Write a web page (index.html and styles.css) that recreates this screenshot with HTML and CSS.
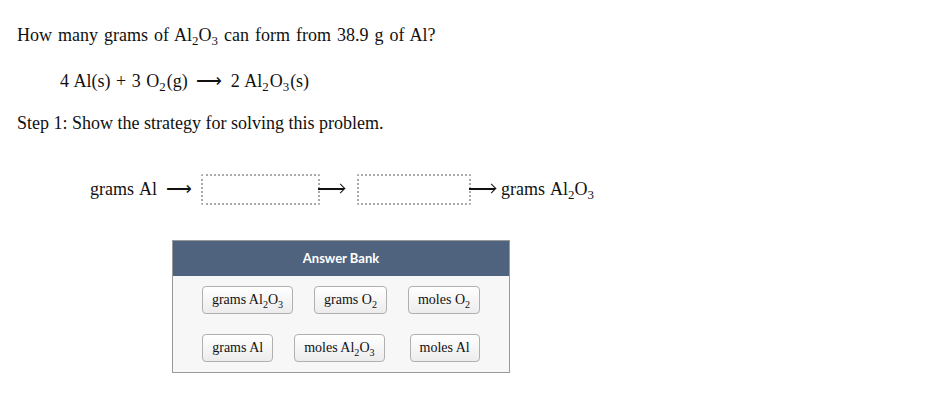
FILE: index.html
```html
<!DOCTYPE html>
<html lang="en">
<head>
    <meta charset="UTF-8">
    <title>Stoichiometry strategy</title>
    <link rel="stylesheet" href="styles.css">
</head>
<body>
<div class="question">
    <p class="prompt">How many grams of Al<sub>2</sub>O<sub>3</sub> can form from 38.9 g of Al?</p>
    <p class="equation">4 Al(s) + 3 O<sub>2</sub>(g) <span class="arrow">&#10230;</span> 2 Al<sub>2</sub>O<sub>3</sub>(s)</p>
    <p class="step">Step 1: Show the strategy for solving this problem.</p>

    <div class="strategy">
        <span class="label">grams Al</span>
        <span class="arrow">&#10230;</span>
        <div class="slot"></div>
        <span class="link"></span>
        <div class="slot second"></div>
        <span class="link"></span>
        <span class="label">grams Al<sub>2</sub>O<sub>3</sub></span>
    </div>

    <div class="bank">
        <div class="bank-title">Answer Bank</div>
        <div class="bank-body">
            <div class="bank-row">
                <button class="chip">grams Al<sub>2</sub>O<sub>3</sub></button>
                <button class="chip">grams O<sub>2</sub></button>
                <button class="chip">moles O<sub>2</sub></button>
            </div>
            <div class="bank-row">
                <button class="chip">grams Al</button>
                <button class="chip">moles Al<sub>2</sub>O<sub>3</sub></button>
                <button class="chip wide-gap">moles Al</button>
            </div>
        </div>
    </div>
</div>
</body>
</html>
```

FILE: styles.css
```css
body {
    margin: 0;
    padding: 0;
    background: #ffffff;
    color: #111;
    font-family: "Liberation Serif", "Times New Roman", serif;
    font-size: 18px;
    word-spacing: 1.5px;
}
.question {
    padding: 23px 17px;
}
p {
    margin: 0;
}
sub {
    font-size: 72%;
    vertical-align: -4px;
    line-height: 0;
}
.prompt {
    line-height: 24px;
}
.equation {
    margin-top: 22px;
    padding-left: 43px;
    line-height: 24px;
    word-spacing: 1px;
}
.equation .arrow {
    margin: 0 3px;
}
.equation sub {
    margin-right: 1px;
}
.step {
    margin-top: 18px;
    line-height: 24px;
    word-spacing: 0;
}

/* strategy chain */
.strategy {
    display: flex;
    align-items: center;
    margin-top: 38px;
    padding-left: 73px;
    height: 32px;
}
.strategy .arrow {
    margin: 0 9px;
}
.slot {
    box-sizing: border-box;
    width: 119px;
    height: 31px;
    border: 2px dotted #aaa;
    border-radius: 2px;
}
.slot.second {
    width: 114px;
}
.link {
    position: relative;
    width: 26px;
    height: 2px;
    margin-left: -2px;
    margin-right: 13px;
    background: #111;
}
.link::after {
    content: "";
    position: absolute;
    right: 0;
    top: -3px;
    width: 6px;
    height: 6px;
    border-top: 1.5px solid #111;
    border-right: 1.5px solid #111;
    transform: rotate(45deg);
}
.slot.second + .link {
    margin-right: 6px;
}

/* answer bank */
.bank {
    width: 336px;
    margin: 35px 0 0 155px;
    border: 1px solid #999;
    background: #f7f7f7;
}
.bank-title {
    height: 35px;
    line-height: 35px;
    background: #4f637f;
    color: #fff;
    text-align: center;
    font-family: Lato, "Open Sans", sans-serif;
    font-weight: bold;
    font-size: 13px;
    word-spacing: 0;
}
.bank-body {
    padding: 10px 0;
}
.bank-row {
    display: flex;
    justify-content: center;
    gap: 21px;
}
.bank-row + .bank-row {
    margin-top: 20px;
}
.chip {
    height: 28px;
    padding: 0 9px;
    font-family: "Liberation Serif", "Times New Roman", serif;
    font-size: 14px;
    word-spacing: 0;
    color: #111;
    background: linear-gradient(#ffffff, #ececec);
    border: 1px solid #b0b0b0;
    border-radius: 4px;
}
.chip.wide-gap {
    margin-left: 4px;
}
```
